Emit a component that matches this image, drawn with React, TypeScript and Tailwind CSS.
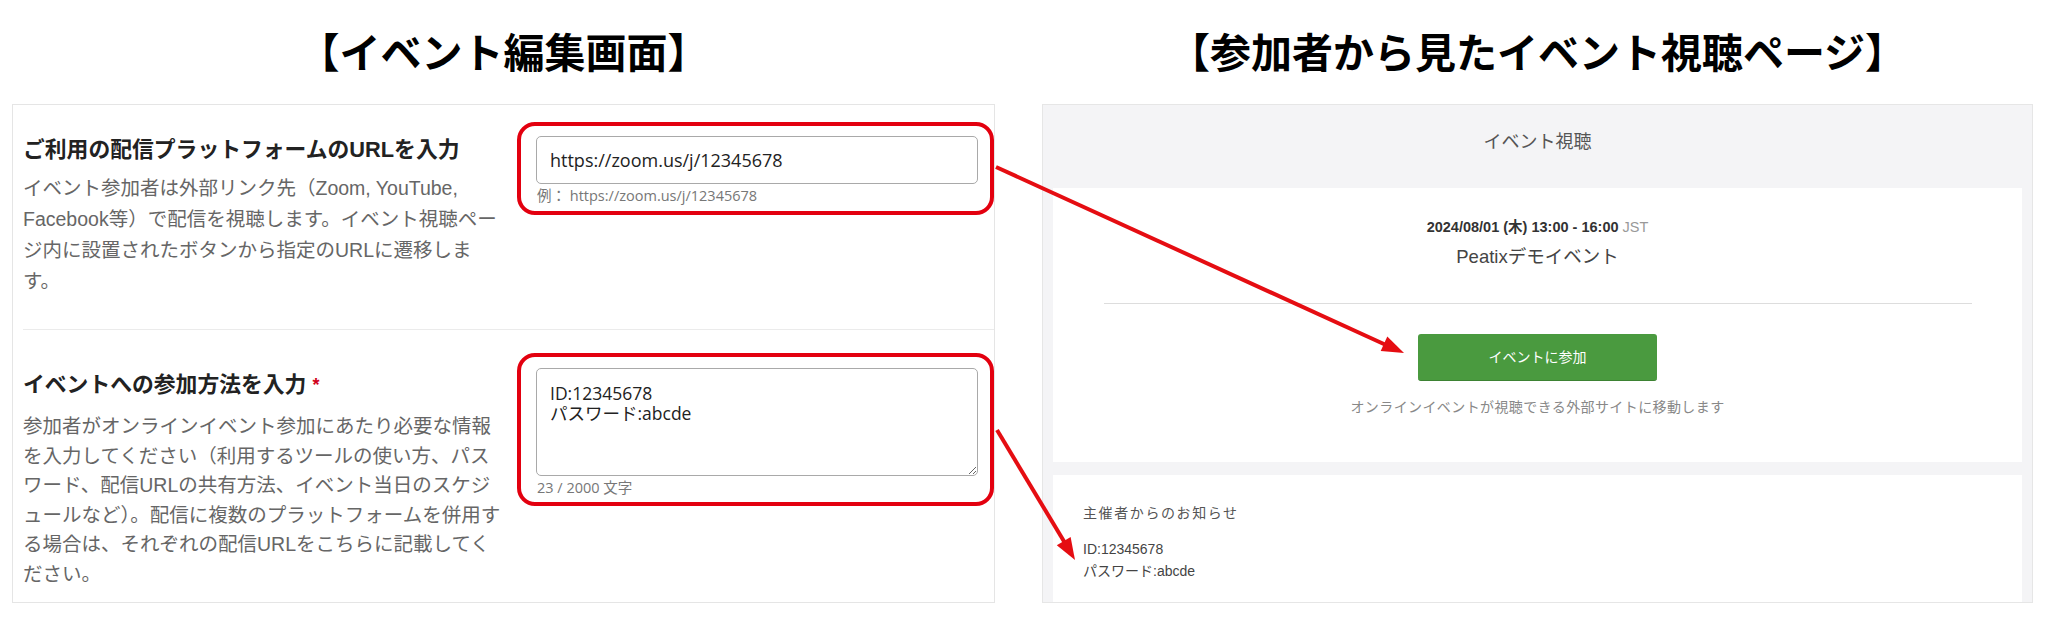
import React from 'react';

const font = "font-['Liberation_Sans','Noto_Sans_CJK_JP',sans-serif]";
const fieldFont = "font-['Open_Sans','Noto_Sans_CJK_JP',sans-serif]";

const desc1 = [
  'イベント参加者は外部リンク先（Zoom, YouTube,',
  'Facebook等）で配信を視聴します。イベント視聴ペー',
  'ジ内に設置されたボタンから指定のURLに遷移しま',
  'す。',
];

const desc2 = [
  '参加者がオンラインイベント参加にあたり必要な情報',
  'を入力してください（利用するツールの使い方、パス',
  'ワード、配信URLの共有方法、イベント当日のスケジ',
  'ュールなど）。配信に複数のプラットフォームを併用す',
  'る場合は、それぞれの配信URLをこちらに記載してく',
  'ださい。',
];

function Arrows() {
  return (
    <svg className="absolute inset-0 pointer-events-none" width="2048" height="621" viewBox="0 0 2048 621">
      <line x1="996" y1="167" x2="1386" y2="345" stroke="#e50d12" strokeWidth="4" />
      <polygon points="1404,353 1380.7,351.1 1387.3,336.5" fill="#e50d12" />
      <line x1="997" y1="430" x2="1065" y2="543" stroke="#e50d12" strokeWidth="4" />
      <polygon points="1075,560 1056.8,545.2 1070.6,537" fill="#e50d12" />
    </svg>
  );
}

export default function App() {
  const redBox = "border-[4px] border-[#e3000f] rounded-[18px] w-[477px]";
  const descClass = "text-[19.5px] leading-[31px] text-[#666] whitespace-nowrap";

  return (
    <div className={`relative w-[2048px] h-[621px] bg-white overflow-hidden ${font}`}>
      <div className="flex gap-[47px] pl-[12px]">
        {/* 編集画面 */}
        <div className="w-[983px]">
          <div className="h-[104px] flex items-center justify-center pt-[4px]">
            <h1 className="text-[41px] font-bold text-black leading-none">【イベント編集画面】</h1>
          </div>
          <div className="h-[499px] border border-[#e5e5e5] flex flex-col">
            <div className="ml-[10px] h-[225px] border-b border-[#ebebeb] flex">
              <div className="w-[494px] pt-[30px]">
                <div className="text-[21.8px] leading-[30px] font-bold text-[#222]">ご利用の配信プラットフォームのURLを入力</div>
                <div className="mt-[8px]">
                  {desc1.map((l, i) => (
                    <div key={i} className={descClass}>{l}</div>
                  ))}
                </div>
              </div>
              <div className="pt-[17px]">
                <div className={`${redBox} pt-[10px] pl-[15px] pr-[12px] pb-[6px]`}>
                  <input
                    readOnly
                    value="https://zoom.us/j/12345678"
                    className={`h-[48px] w-full border border-[#a9a9a9] rounded-[5px] px-[13px] text-[18px] text-[#222] outline-none bg-white ${fieldFont}`}
                  />
                  <div className={`mt-[3px] pl-[1px] text-[14.5px] leading-[18px] text-[#777] ${fieldFont}`}>例： https://zoom.us/j/12345678</div>
                </div>
              </div>
            </div>
            <div className="ml-[10px] flex-1 flex">
              <div className="w-[494px] pt-[40px]">
                <div className="text-[21.8px] leading-[30px] font-bold text-[#222]">
                  イベントへの参加方法を入力 <span className="text-[#d0021b] text-[18px] align-top">*</span>
                </div>
                <div className="mt-[12px]">
                  {desc2.map((l, i) => (
                    <div key={i} className="text-[19.5px] leading-[29.6px] text-[#666] whitespace-nowrap">{l}</div>
                  ))}
                </div>
              </div>
              <div className="pt-[23px]">
                <div className={`${redBox} pt-[11px] pl-[15px] pr-[12px] pb-[5px]`}>
                  <textarea
                    readOnly
                    value={'ID:12345678\nパスワード:abcde'}
                    className={`block h-[108px] w-full border border-[#a9a9a9] rounded-[5px] px-[13px] pt-[14px] text-[17.5px] leading-[20px] text-[#222] outline-none bg-white ${fieldFont}`}
                  />
                  <div className={`mt-[3px] pl-[1px] text-[14.5px] leading-[18px] text-[#777] ${fieldFont}`}>23 / 2000 文字</div>
                </div>
              </div>
            </div>
          </div>
        </div>

        {/* 視聴ページ */}
        <div className="w-[991px]">
          <div className="h-[104px] flex items-center justify-center pt-[4px]">
            <h1 className="text-[41px] font-bold text-black leading-none">【参加者から見たイベント視聴ページ】</h1>
          </div>
          <div className="h-[499px] border border-[#e6e6e6] bg-[#f4f4f6] flex flex-col">
            <div className="h-[83px] flex items-center justify-center pb-[8px] text-[18px] text-[#555]">イベント視聴</div>
            <div className="mx-[10px] h-[274px] bg-white flex flex-col items-center pt-[29px]">
              <div className="text-[14.5px] leading-[20px] font-bold text-[#333]">
                2024/08/01 (木) 13:00 - 16:00 <span className="font-normal text-[#999]">JST</span>
              </div>
              <div className="mt-[7px] text-[18.5px] leading-[26px] text-[#444]">Peatixデモイベント</div>
              <div className="mt-[33px] w-[868px] h-px bg-[#dddddd]" />
              <button className="mt-[30px] w-[239px] h-[47px] rounded-[3px] bg-[#4a9a3f] border-b border-[#3d8233] text-white text-[14px]">
                イベントに参加
              </button>
              <div className="mt-[16px] text-[14px] leading-[20px] text-[#888] tracking-[0.4px]">オンラインイベントが視聴できる外部サイトに移動します</div>
            </div>
            <div className="mx-[10px] mt-[13px] flex-1 bg-white px-[30px] pt-[28px]">
              <div className="text-[14px] leading-[20px] text-[#555] tracking-[1.6px]">主催者からのお知らせ</div>
              <div className="mt-[15px] text-[14px] leading-[22px] text-[#444]">
                <div>ID:12345678</div>
                <div>パスワード:abcde</div>
              </div>
            </div>
          </div>
        </div>
      </div>
      <Arrows />
    </div>
  );
}
